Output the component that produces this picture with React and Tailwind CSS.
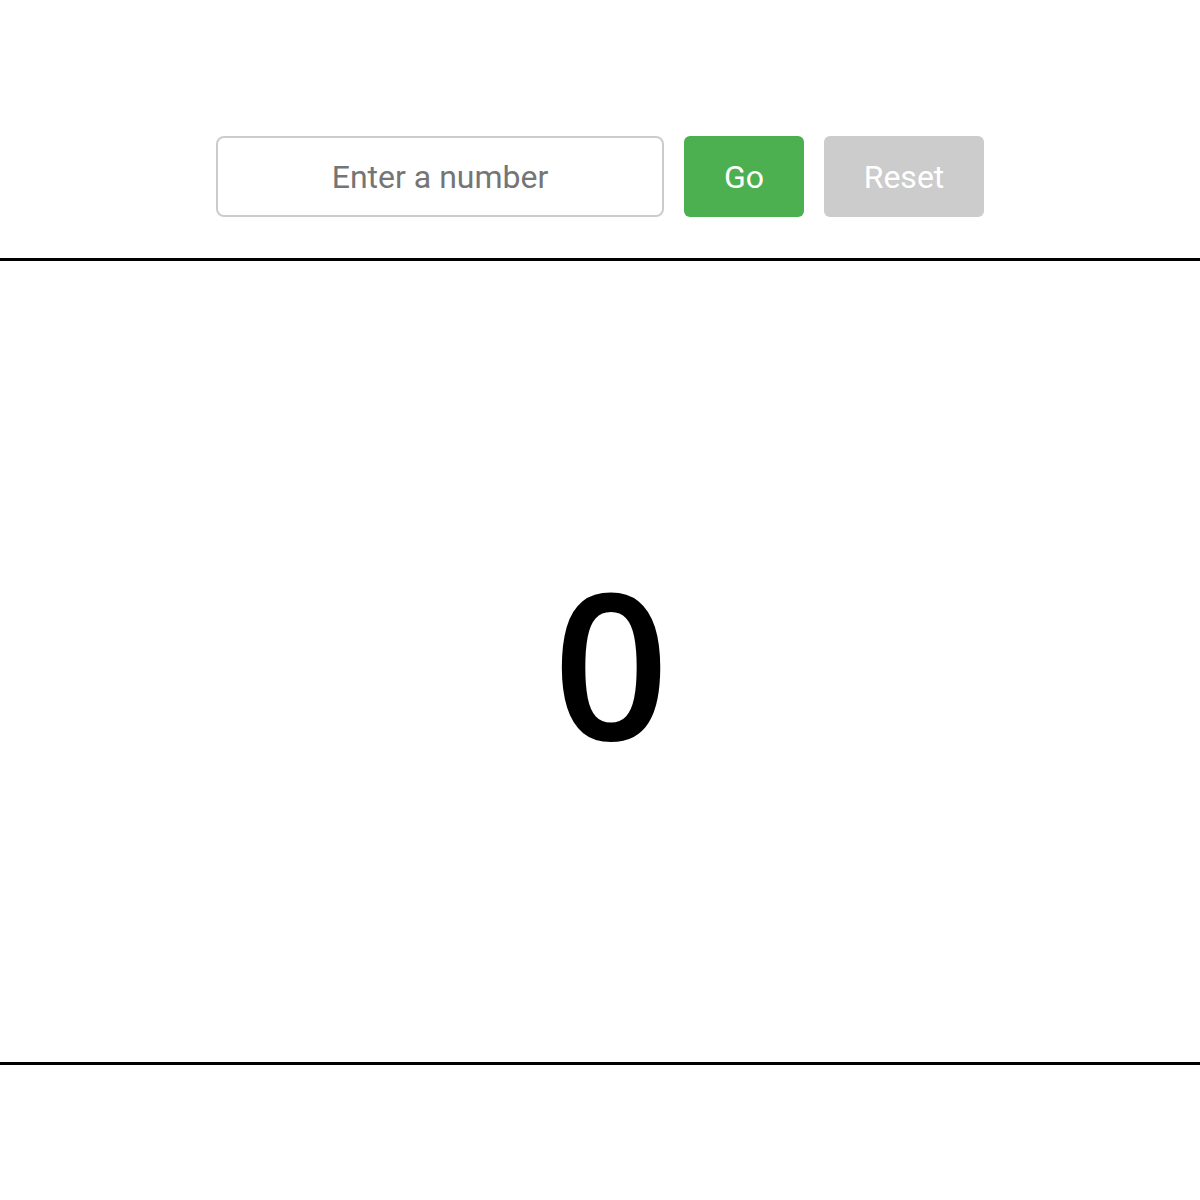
import { useState } from 'react'

export default function App() {
  const [value, setValue] = useState('')
  const [count, setCount] = useState(0)

  return (
    <div className="min-h-[1200px] bg-white font-['Roboto',sans-serif]">
      <div className="flex justify-center gap-5 pt-[136px] pb-[41px]">
        <input
          type="text"
          value={value}
          onChange={(e) => setValue(e.target.value)}
          placeholder="Enter a number"
          className="w-[448px] h-[81px] border-2 border-[#cccccc] rounded-lg text-center text-[32px] text-[#333] placeholder:text-[#757575] outline-none"
        />
        <button
          onClick={() => setCount(Number(value) || 0)}
          className="w-[120px] h-[81px] rounded-md bg-[#4caf50] text-white text-[32px]"
        >
          Go
        </button>
        <button
          onClick={() => { setCount(0); setValue('') }}
          className="w-[160px] h-[81px] rounded-md bg-[#cccccc] text-white text-[32px]"
        >
          Reset
        </button>
      </div>
      <div className="h-[807px] border-y-[3px] border-black flex items-center justify-center">
        <span className="font-['Open_Sans',sans-serif] font-semibold text-[203px] leading-none text-black pl-[22px]">
          {count}
        </span>
      </div>
    </div>
  )
}
